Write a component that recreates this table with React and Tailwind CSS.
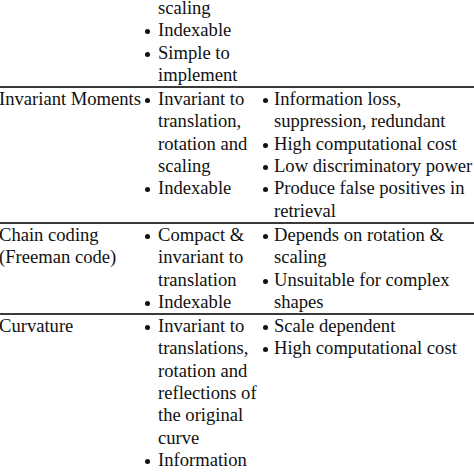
import React from "react";

const rows = [
  {
    name: [],
    pros: [{ t: "scaling", cont: true }, { t: "Indexable" }, { t: "Simple to implement" }],
    cons: [],
    first: true,
  },
  {
    name: ["Invariant Moments"],
    pros: [{ t: "Invariant to translation, rotation and scaling" }, { t: "Indexable" }],
    cons: [
      { t: "Information loss, suppression, redundant" },
      { t: "High computational cost" },
      { t: "Low discriminatory power" },
      { t: "Produce false positives in retrieval" },
    ],
  },
  {
    name: ["Chain coding", "(Freeman code)"],
    pros: [{ t: "Compact & invariant to translation" }, { t: "Indexable" }],
    cons: [{ t: "Depends on rotation & scaling" }, { t: "Unsuitable for complex shapes" }],
  },
  {
    name: ["Curvature"],
    pros: [
      { t: "Invariant to translations, rotation and reflections of the original curve" },
      { t: "Information preserving" },
    ],
    cons: [{ t: "Scale dependent" }, { t: "High computational cost" }],
  },
];

function Item({ t, cont, gap }) {
  return (
    <div className="flex">
      <div className={`${gap} flex-none relative`}>
        {!cont && (
          <span className="absolute left-0 top-[10px] w-[5px] h-[5px] rounded-full bg-[#111]" />
        )}
      </div>
      <div className="flex-1">{t}</div>
    </div>
  );
}

export default function App() {
  return (
    <div
      className="w-[474px] h-[474px] overflow-hidden bg-white text-[#111] text-[18.6px] leading-[22.3px]"
      style={{ fontFamily: '"Liberation Serif", "Times New Roman", serif' }}
    >
      <div className="w-[476px]">
        {rows.map((r, i) => (
          <div
            key={i}
            className={`grid grid-cols-[145px_118px_213px] ${
              r.first ? "-mt-[3px]" : "border-t-2 border-[#3a3a3a]"
            }`}
          >
            <div className="-ml-[1px]">
              {r.name.map((n, j) => (
                <div key={j} className="whitespace-nowrap">{n}</div>
              ))}
            </div>
            <div>
              {r.pros.map((p, j) => (
                <Item key={j} {...p} gap="w-[13px]" />
              ))}
            </div>
            <div>
              {r.cons.map((p, j) => (
                <Item key={j} {...p} gap="w-[11px]" />
              ))}
            </div>
          </div>
        ))}
      </div>
    </div>
  );
}
